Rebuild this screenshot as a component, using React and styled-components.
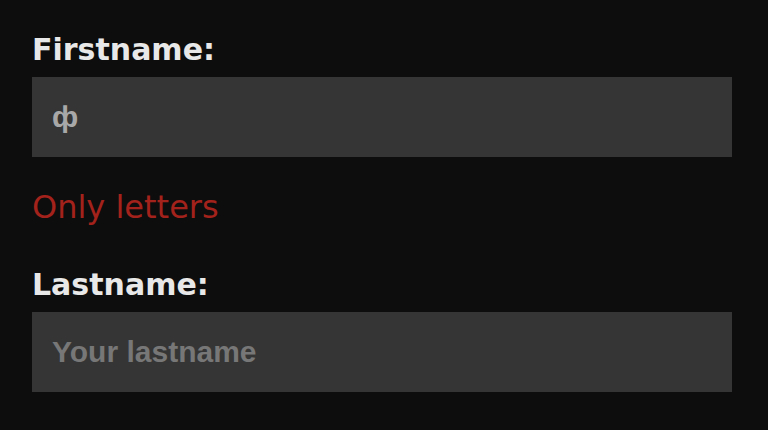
import React, { useState } from "react";
import styled, { createGlobalStyle } from "styled-components";

const GlobalStyle = createGlobalStyle`
  html, body {
    margin: 0;
    padding: 0;
    background: #0d0d0d;
  }
`;

const Page = styled.div`
  min-height: 430px;
  background: #0d0d0d;
  padding: 33px 36px 0 32px;
  box-sizing: border-box;
`;

const Form = styled.form`
  display: flex;
  flex-direction: column;
  width: 700px;
`;

const Field = styled.div`
  display: flex;
  flex-direction: column;
  margin-bottom: ${(p) => p.$gap || 0}px;
`;

const Label = styled.label`
  font-family: "DejaVu Sans", Verdana, sans-serif;
  font-weight: bold;
  font-size: 30px;
  line-height: 34px;
  color: #e8e8e8;
  margin-bottom: 10px;
`;

const Input = styled.input`
  box-sizing: border-box;
  width: 100%;
  height: 80px;
  border: none;
  outline: none;
  background: #353535;
  padding: 0 20px;
  font-family: "Liberation Sans", Arial, sans-serif;
  font-weight: bold;
  font-size: 30px;
  color: #a8a8a8;

  &::placeholder {
    color: #777777;
  }
`;

const Error = styled.div`
  font-family: "DejaVu Sans", Verdana, sans-serif;
  font-size: 32px;
  line-height: 37px;
  color: #a3221b;
  margin-top: 32px;
`;

const App = () => {
  const [first, setFirst] = useState("ф");
  const [last, setLast] = useState("");
  const invalid = first !== "" && !/^[a-zA-Z]+$/.test(first);

  return (
    <Page>
      <GlobalStyle />
      <Form onSubmit={(e) => e.preventDefault()}>
        <Field $gap={42}>
          <Label htmlFor="firstname">Firstname:</Label>
          <Input
            id="firstname"
            value={first}
            placeholder="Your firstname"
            onChange={(e) => setFirst(e.target.value)}
          />
          {invalid && <Error>Only letters</Error>}
        </Field>
        <Field>
          <Label htmlFor="lastname">Lastname:</Label>
          <Input
            id="lastname"
            value={last}
            placeholder="Your lastname"
            onChange={(e) => setLast(e.target.value)}
          />
        </Field>
      </Form>
    </Page>
  );
};

export default App;
